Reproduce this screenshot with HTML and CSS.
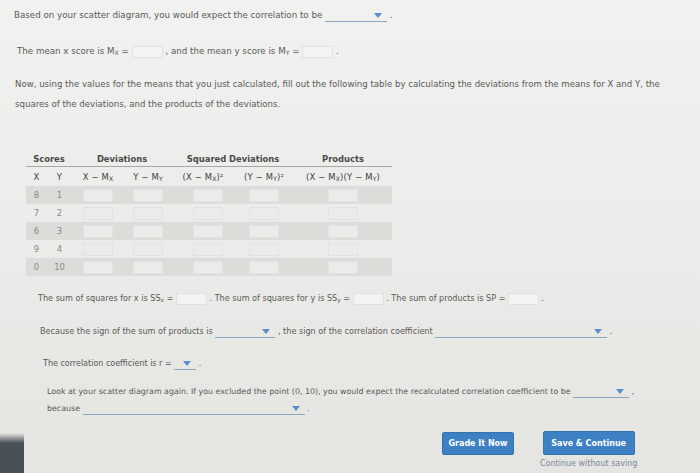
FILE: index.html
```html
<!DOCTYPE html>
<html>
<head>
<meta charset="utf-8">
<link rel="stylesheet" href="styles.css">
</head>
<body>
<div class="page">
  <div class="line l1">Based on your scatter diagram, you would expect the correlation to be <span class="dd w62"></span> .</div>
  <div class="line l2">The mean x score is M<sub>X</sub> = <span class="box"></span> , and the mean y score is M<sub>Y</sub> = <span class="box"></span> .</div>
  <p class="para">Now, using the values for the means that you just calculated, fill out the following table by calculating the deviations from the means for X and Y, the squares of the deviations, and the products of the deviations.</p>

  <table class="tbl">
    <colgroup>
      <col class="c1"><col class="c2"><col class="c3"><col class="c4"><col class="c5"><col class="c6"><col class="c7">
    </colgroup>
    <thead>
      <tr class="grp">
        <th colspan="2"><span>Scores</span></th>
        <th colspan="2"><span>Deviations</span></th>
        <th colspan="2"><span>Squared Deviations</span></th>
        <th><span>Products</span></th>
      </tr>
      <tr class="sub">
        <th>X</th><th>Y</th>
        <th>X − M<sub>X</sub></th><th>Y − M<sub>Y</sub></th>
        <th>(X − M<sub>X</sub>)²</th><th>(Y − M<sub>Y</sub>)²</th>
        <th>(X − M<sub>X</sub>)(Y − M<sub>Y</sub>)</th>
      </tr>
    </thead>
    <tbody>
      <tr class="odd"><td>8</td><td>1</td><td><span class="cell"></span></td><td><span class="cell"></span></td><td><span class="cell"></span></td><td><span class="cell"></span></td><td><span class="cell"></span></td></tr>
      <tr><td>7</td><td>2</td><td><span class="cell"></span></td><td><span class="cell"></span></td><td><span class="cell"></span></td><td><span class="cell"></span></td><td><span class="cell"></span></td></tr>
      <tr class="odd"><td>6</td><td>3</td><td><span class="cell"></span></td><td><span class="cell"></span></td><td><span class="cell"></span></td><td><span class="cell"></span></td><td><span class="cell"></span></td></tr>
      <tr><td>9</td><td>4</td><td><span class="cell"></span></td><td><span class="cell"></span></td><td><span class="cell"></span></td><td><span class="cell"></span></td><td><span class="cell"></span></td></tr>
      <tr class="odd"><td>0</td><td>10</td><td><span class="cell"></span></td><td><span class="cell"></span></td><td><span class="cell"></span></td><td><span class="cell"></span></td><td><span class="cell"></span></td></tr>
    </tbody>
  </table>

  <div class="line l3">The sum of squares for x is SS<sub>x</sub> = <span class="box"></span> . The sum of squares for y is SS<sub>y</sub> = <span class="box"></span> . The sum of products is SP = <span class="box"></span> .</div>
  <div class="line l4">Because the sign of the sum of products is <span class="dd w60"></span> , the sign of the correlation coefficient <span class="dd w172"></span> .</div>
  <div class="line l5">The correlation coefficient is r = <span class="dd w22"></span> .</div>
  <div class="line l6">Look at your scatter diagram again. If you excluded the point (0, 10), you would expect the recalculated correlation coefficient to be <span class="dd w56"></span> ,</div>
  <div class="line l7">because <span class="dd w222"></span> .</div>

  <div class="actions">
    <button class="btn grade">Grade It Now</button>
    <div class="save-group">
      <button class="btn save">Save &amp; Continue</button>
      <div class="skip">Continue without saving</div>
    </div>
  </div>
</div>
<div class="corner"></div>
</body>
</html>
```
FILE: styles.css
```css
html, body {
  margin: 0;
  padding: 0;
}
body {
  width: 700px;
  height: 473px;
  overflow: hidden;
  background: linear-gradient(180deg, #f1f1ef 0%, #ececea 45%, #e4e4e0 100%);
  font-family: "DejaVu Sans", Verdana, sans-serif;
  font-size: 8px;
  color: #5a5a5a;
  position: relative;
}
.page {
  padding-top: 8px;
}
.line {
  line-height: 14px;
  height: 14px;
  white-space: nowrap;
}
sub {
  font-size: 0.72em;
  vertical-align: -1px;
  line-height: 0;
}
.l1 { padding-left: 14px; font-size: 8.7px; }
.l2 { padding-left: 17px; margin-top: 22px; font-size: 8.7px; }
.para {
  margin: 16px 0 0 0;
  padding-left: 15px;
  width: 670px;
  line-height: 20px;
  font-size: 8.6px;
}
.l3 { padding-left: 38px; margin-top: 15px; font-size: 8.1px; }
.l4 { padding-left: 40px; margin-top: 19px; font-size: 8.1px; }
.l5 { padding-left: 43px; margin-top: 19px; font-size: 8px; }
.l6 { padding-left: 47px; margin-top: 14px; font-size: 7.9px; }
.l7 { padding-left: 47px; margin-top: 3px; font-size: 7.9px; }

.box {
  display: inline-block;
  width: 31px;
  height: 12px;
  vertical-align: middle;
  background: #f3f3f1;
  border: 1px solid #e0e0dd;
  box-sizing: border-box;
}
.dd {
  display: inline-block;
  position: relative;
  height: 11px;
  vertical-align: middle;
  border-bottom: 1px solid #8aa6c6;
}
.dd::after {
  content: "";
  position: absolute;
  right: 5px;
  top: 3px;
  border-left: 4px solid transparent;
  border-right: 4px solid transparent;
  border-top: 5px solid #5b8dcc;
}
.w62 { width: 62px; }
.w60 { width: 60px; }
.w172 { width: 172px; }
.w22 { width: 22px; }
.w56 { width: 56px; }
.w222 { width: 222px; }

.tbl {
  margin: 37px 0 0 26px;
  border-collapse: collapse;
  table-layout: fixed;
  width: 366px;
  font-size: 8.4px;
}
.c1 { width: 21px; }
.c2 { width: 25px; }
.c3 { width: 52px; }
.c4 { width: 48px; }
.c5 { width: 62px; }
.c6 { width: 60px; }
.c7 { width: 98px; }
.tbl th, .tbl td {
  padding: 0;
  text-align: center;
  white-space: nowrap;
}
.grp th {
  height: 15px;
  font-weight: bold;
  color: #4a4a4a;
  border-bottom: 1px solid #a8a8a6;
  vertical-align: middle;
}
.sub th {
  height: 19px;
  font-weight: normal;
  color: #3e3e3e;
  letter-spacing: 0.2px;
}
.tbl td {
  height: 18px;
  color: #8a8a8a;
}
.tbl tr.odd td {
  background: #dcdcd9;
}
.cell {
  display: inline-block;
  width: 30px;
  height: 13px;
  vertical-align: middle;
  background: #ebebe9;
  border: 1px solid #e2e2df;
  box-sizing: border-box;
}
.tbl td:nth-child(5) .cell { margin-left: 10px; }

.actions {
  display: flex;
  align-items: flex-start;
  margin: 15px 0 0 442px;
  gap: 26px;
}
.btn {
  font-family: "DejaVu Sans", Verdana, sans-serif;
  font-size: 8px;
  font-weight: bold;
  color: #ffffff;
  background: #3d80c3;
  border: 1px solid #3572b0;
  border-radius: 2px;
  padding: 0;
  height: 24px;
}
.grade { width: 72px; margin-top: 1px; height: 23px; }
.save { width: 92px; }
.save-group {
  display: flex;
  flex-direction: column;
  align-items: center;
}
.skip {
  margin-top: 4px;
  color: #7a889c;
  font-size: 8px;
}
.corner {
  position: absolute;
  left: 0;
  bottom: 0;
  width: 24px;
  height: 40px;
  background: linear-gradient(180deg, rgba(74,80,88,0) 0%, #4a5058 25%, #4a5058 100%);
}
```
